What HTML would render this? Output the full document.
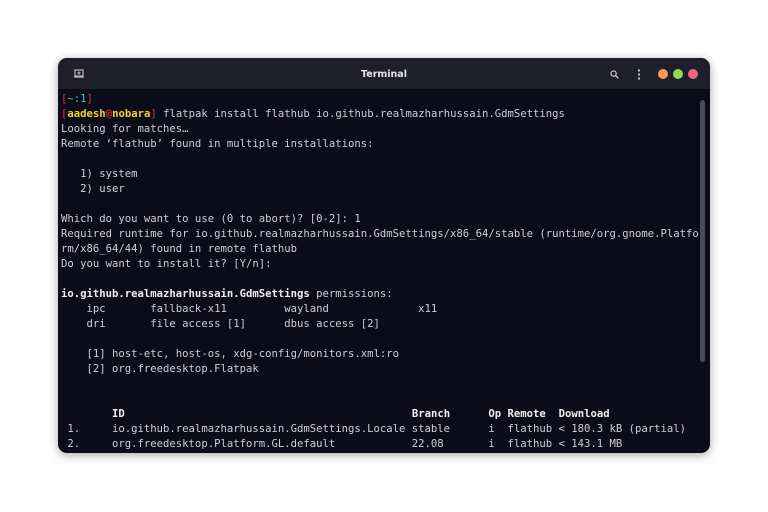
<!DOCTYPE html>
<html><head><meta charset="utf-8"><style>
html,body{margin:0;padding:0;width:768px;height:512px;background:#fff;overflow:hidden}
.win{position:absolute;left:58px;top:58px;width:652px;height:395px;border-radius:9px;background:#0c0b19;overflow:hidden;box-shadow:0 2px 10px rgba(0,0,0,.35)}
.tb{position:absolute;left:0;top:0;width:652px;height:31px;background:#1f1f2b}
.title{position:absolute;left:0;right:0;top:11px;text-align:center;font:bold 9.5px "DejaVu Sans","Liberation Sans",sans-serif;color:#e6e6ea}
.dot{position:absolute;top:11px;width:10px;height:10px;border-radius:50%}
pre{position:absolute;left:3px;top:34px;margin:0;font:10.6px/15px "DejaVu Sans Mono","Liberation Mono",monospace;color:#cfcfd6;white-space:pre}
b{color:#f0f0f4}
.r{color:#e0334a}.g{color:#3fcf5a}.c{color:#36c8d6}.y{color:#f1d32b;font-weight:bold}
.sb{position:absolute;left:642px;top:42px;width:5px;height:262px;border-radius:3px;background:#4a4a58}
</style></head><body>
<div class="win">
<div class="tb">
<svg style="position:absolute;left:16px;top:11px" width="10" height="9" viewBox="0 0 10 9"><rect x="1" y="1" width="8" height="6" fill="none" stroke="#bbb" stroke-width="1.2"/><path d="M5 2.5v3M3.5 4h3M0 8h10" stroke="#bbb" stroke-width="1.2"/></svg>
<div class="title">Terminal</div>
<svg style="position:absolute;left:552px;top:12px" width="9" height="9" viewBox="0 0 9 9"><circle cx="3.6" cy="3.6" r="2.6" fill="none" stroke="#ccc" stroke-width="1.2"/><path d="M5.5 5.5L8.3 8.3" stroke="#ccc" stroke-width="1.3"/></svg>
<svg style="position:absolute;left:579px;top:11px" width="4" height="11"><circle cx="2" cy="1.5" r="1.1" fill="#ccc"/><circle cx="2" cy="5.5" r="1.1" fill="#ccc"/><circle cx="2" cy="9.5" r="1.1" fill="#ccc"/></svg>
<div class="dot" style="left:600px;background:#f59a5a"></div>
<div class="dot" style="left:615px;background:#98d85a"></div>
<div class="dot" style="left:630px;background:#f06582"></div>
</div>
<div class="sb"></div>
<pre><span class="r">[</span><span class="g">~</span><span class="c">:1</span><span class="r">]</span>
<span class="r">[</span><span class="y">aadesh</span><span class="r">@</span><span class="y">nobara</span><span class="r">]</span> flatpak install flathub io.github.realmazharhussain.GdmSettings
Looking for matches…
Remote ‘flathub’ found in multiple installations:

   1) system
   2) user

Which do you want to use (0 to abort)? [0-2]: 1
Required runtime for io.github.realmazharhussain.GdmSettings/x86_64/stable (runtime/org.gnome.Platfo
rm/x86_64/44) found in remote flathub
Do you want to install it? [Y/n]:

<b>io.github.realmazharhussain.GdmSettings</b> permissions:
    ipc       fallback-x11         wayland              x11
    dri       file access [1]      dbus access [2]

    [1] host-etc, host-os, xdg-config/monitors.xml:ro
    [2] org.freedesktop.Flatpak


        <b>ID</b>                                             <b>Branch</b>      <b>Op</b> <b>Remote</b>  <b>Download</b>
 1.     io.github.realmazharhussain.GdmSettings.Locale stable      i  flathub &lt; 180.3 kB (partial)
 2.     org.freedesktop.Platform.GL.default            22.08       i  flathub &lt; 143.1 MB</pre>
</div>
</body></html>
